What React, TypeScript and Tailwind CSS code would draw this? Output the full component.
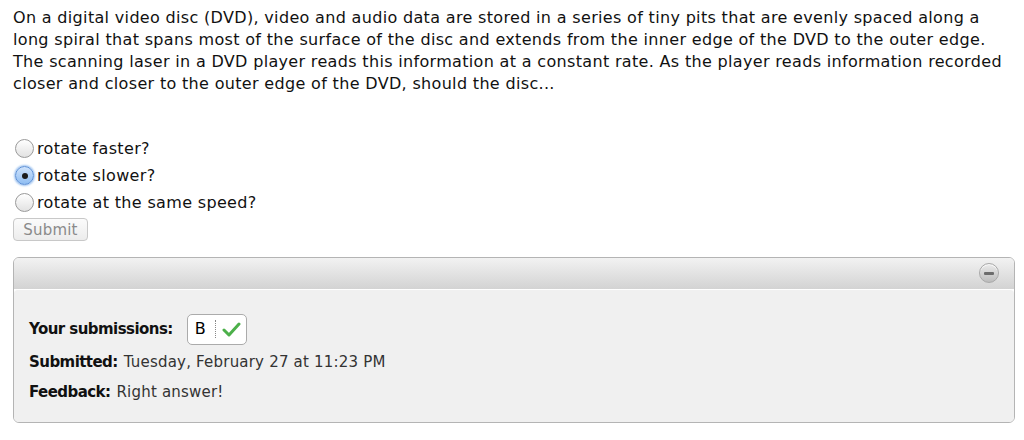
import React from "react";

const font = { fontFamily: '"DejaVu Sans", Verdana, sans-serif' };

function Radio({ checked }: { checked?: boolean }) {
  return (
    <span
      className={`w-[19px] h-[19px] rounded-full border shrink-0 flex items-center justify-center ${
        checked
          ? "border-[#5b8fd6] bg-gradient-to-b from-[#cfe3fb] to-[#8fbdf2] shadow-[0_0_2px_1px_#9cc2f0]"
          : "border-[#9a9a9a] bg-gradient-to-b from-[#ffffff] to-[#e2e2e2]"
      }`}
    >
      {checked && <span className="w-[6px] h-[6px] rounded-full bg-[#1b1b1b]" />}
    </span>
  );
}

export default function App() {
  const options = [
    { label: "rotate faster?", checked: false },
    { label: "rotate slower?", checked: true },
    { label: "rotate at the same speed?", checked: false },
  ];

  return (
    <div className="w-[1024px] h-[440px] bg-white px-[13px] pt-[7px] text-[#111]" style={font}>
      <p className="text-[16px] leading-[22px] tracking-[0.33px]">
        On a digital video disc (DVD), video and audio data are stored in a series of tiny pits that are evenly spaced along a
        <br />
        long spiral that spans most of the surface of the disc and extends from the inner edge of the DVD to the outer edge.
        <br />
        The scanning laser in a DVD player reads this information at a constant rate. As the player reads information recorded
        <br />
        closer and closer to the outer edge of the DVD, should the disc...
      </p>

      {/* Choices */}
      <div className="mt-[40px] flex flex-col">
        {options.map((o) => (
          <label key={o.label} className="flex items-center h-[27px] text-[16px] tracking-[0.33px]">
            <span className="ml-[2px]">
              <Radio checked={o.checked} />
            </span>
            <span className="ml-[3px]">{o.label}</span>
          </label>
        ))}
      </div>
      <button className="mt-[2px] w-[75px] h-[23px] pt-[1px] rounded-[4px] border border-[#c8c8c8] bg-gradient-to-b from-[#fbfbfb] to-[#ececec] text-[15px] text-[#8a8a8a] leading-none tracking-[0.2px]">
        Submit
      </button>

      {/* Submission panel */}
      <div className="mt-[15px] w-[1002px] h-[166px] rounded-[6px] border border-[#b4b4b4] overflow-hidden flex flex-col">
        <div className="h-[31px] shrink-0 bg-gradient-to-b from-[#f2f2f2] to-[#d3d3d3] flex items-center justify-end pr-[15px]">
          <span className="w-[20px] h-[20px] rounded-full border border-[#a8a8a8] bg-gradient-to-b from-[#ececec] to-[#bcbcbc] flex items-center justify-center shadow-[inset_0_1px_0_#fafafa]">
            <span className="w-[10px] h-[3px] rounded-[1px] bg-[#6c6c6c]" />
          </span>
        </div>
        <div className="flex-1 bg-[#f0f0f0] border-t border-white rounded-t-[4px] px-[15px] pt-[24px] text-[15px] tracking-[0.2px]">
          <div className="flex items-center h-[31px]">
            <span className="font-bold tracking-[-0.55px]">Your submissions:</span>
            <span className="ml-[14px] w-[60px] h-[31px] rounded-[5px] border border-[#ababab] bg-white flex items-center">
              <span className="ml-[7px] text-[16px] text-black">B</span>
              <span className="ml-[9px] h-[18px] border-l border-dotted border-[#888]" />
              <svg className="ml-[6px]" width="19" height="15" viewBox="0 0 19 15">
                <path d="M2 8 L7 13 L17 2" fill="none" stroke="#4cb04a" strokeWidth="3" strokeLinecap="round" strokeLinejoin="round" />
              </svg>
            </span>
          </div>
          <div className="mt-[7px] h-[22px] flex items-center">
            <span className="font-bold tracking-[-0.55px]">Submitted:</span>
            <span className="ml-[6px] text-[#333]">Tuesday, February 27 at 11:23 PM</span>
          </div>
          <div className="mt-[8px] h-[22px] flex items-center">
            <span className="font-bold tracking-[-0.55px]">Feedback:</span>
            <span className="ml-[6px] text-[#333]">Right answer!</span>
          </div>
        </div>
      </div>
    </div>
  );
}
